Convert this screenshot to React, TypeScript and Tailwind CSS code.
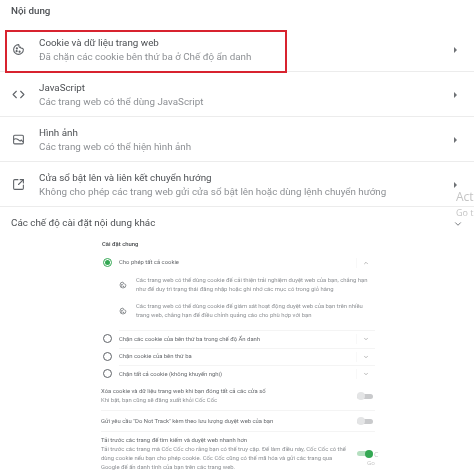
import { ChevronDown, ChevronUp, Code, SquareArrowOutUpRight } from "lucide-react";
import type { ReactNode } from "react";

function CookieIcon({ className }: { className: string }) {
  return (
    <svg viewBox="0 0 24 24" fill="none" stroke="currentColor" strokeWidth="2" className={className}>
      <path d="M12 3a9 9 0 1 0 9 9c-.3-1.6-1.6-1.6-2.6-2.4-1.2.4-2.8-.4-3-1.9C13.800 8.700 12.400 7 13 4.500 12.800 3.700 12.500 3.200 12 3Z" />
      <circle cx="9" cy="10" r="1" fill="currentColor" />
      <circle cx="8.500" cy="15" r="1" fill="currentColor" />
      <circle cx="14" cy="16" r="1" fill="currentColor" />
    </svg>
  );
}

function PictureIcon({ className }: { className: string }) {
  return (
    <svg viewBox="0 0 24 24" fill="none" stroke="currentColor" strokeWidth="2" className={className}>
      <rect x="3" y="4" width="18" height="16" rx="2" />
      <path d="M3 12c3-2 5-2 8 0l4 3 2-2 4 4" />
    </svg>
  );
}

function Row({ icon, title, sub }: { icon: ReactNode; title: string; sub: string }) {
  return (
    <div className="flex h-[45px] items-center border-b border-[#ececec] pl-[12px] pr-[17px] pt-[1px]">
      <div className="flex w-[27px] shrink-0 text-[#5f6368]">{icon}</div>
      <div className="flex-1 leading-[13.500px]">
        <div className="text-[9.800px] text-[#4d5054]">{title}</div>
        <div className="text-[9.800px] text-[#8d9094]">{sub}</div>
      </div>
      <div className="h-0 w-0 border-y-[3px] border-l-[3.500px] border-y-transparent border-l-[#6f7276]" />
    </div>
  );
}

function Radio({ label, on, sep }: { label: string; on?: boolean; sep?: boolean }) {
  return (
    <div className="flex items-center pl-[1.500px]">
      <div className={`flex h-[9px] w-[9px] shrink-0 items-center justify-center rounded-full border ${on ? "border-[#34a853]" : "border-[#5f6368]"}`}>
        {on && <div className="h-[5px] w-[5px] rounded-full bg-[#34a853]" />}
      </div>
      <div className={`ml-[7.500px] flex h-[17.500px] flex-1 items-center border-[#f4f4f4] text-[5.900px] text-[#66696d] ${sep ? "border-t" : ""}`}>
        <div className="flex-1">{label}</div>
        <div className="flex h-[10px] w-[19px] items-center justify-center border-l border-[#f8f8f8]">
          {on ? <ChevronUp className="h-[6px] w-[6px] text-[#777]" /> : <ChevronDown className="h-[6px] w-[6px] text-[#777]" />}
        </div>
      </div>
    </div>
  );
}

function Toggle({ on }: { on?: boolean }) {
  return (
    <div className={`relative h-[5px] w-[16px] shrink-0 rounded-full ${on ? "bg-[#b5dfc0]" : "bg-[#c9cacc]"}`}>
      <div className={`absolute top-[-1.500px] h-[8px] w-[8px] rounded-full ${on ? "right-0 bg-[#34a853]" : "left-0 bg-[#e4e5e6]"}`} />
    </div>
  );
}

export default function App() {
  return (
    <div className="relative h-[474px] w-[474px] overflow-hidden bg-white font-['Roboto',sans-serif] blur-[0.5px]">
      <div className="flex h-[27px] items-center pb-[5px] pl-[11px] text-[9.800px] font-medium text-[#4d5054]">Nội dung</div>
      <Row icon={<CookieIcon className="h-[13px] w-[13px]" />} title="Cookie và dữ liệu trang web" sub="Đã chặn các cookie bên thứ ba ở Chế độ ẩn danh" />
      <Row icon={<Code className="h-[13px] w-[13px]" />} title="JavaScript" sub="Các trang web có thể dùng JavaScript" />
      <Row icon={<PictureIcon className="h-[13px] w-[13px]" />} title="Hình ảnh" sub="Các trang web có thể hiện hình ảnh" />
      <Row icon={<SquareArrowOutUpRight className="h-[13px] w-[13px]" />} title="Cửa sổ bật lên và liên kết chuyển hướng" sub="Không cho phép các trang web gửi cửa sổ bật lên hoặc dùng lệnh chuyển hướng" />
      <div className="flex h-[33px] items-center pl-[11px] pr-[11px] text-[9.800px] text-[#4d5054]">
        <div className="flex-1">Các chế độ cài đặt nội dung khác</div>
        <ChevronDown className="h-[10px] w-[10px] text-[#5f6368]" />
      </div>

      <div className="ml-[101px] w-[274px]">
        <div className="ml-[1px] text-[5.900px] font-medium leading-[8px] text-[#44474a]">Cài đặt chung</div>
        <div className="mt-[6px]">
          <Radio label="Cho phép tất cả cookie" on />
          <div className="pl-[18px] pt-[4.500px] text-[5.900px] leading-[9px] text-[#8d9094]">
            <div className="flex items-center">
              <CookieIcon className="mr-[9px] h-[8px] w-[8px] shrink-0 text-[#5f6368]" />
              <div className="w-[236px]">Các trang web có thể dùng cookie để cải thiện trải nghiệm duyệt web của bạn, chẳng hạn như để duy trì trạng thái đăng nhập hoặc ghi nhớ các mục có trong giỏ hàng</div>
            </div>
            <div className="mt-[8px] flex items-center">
              <CookieIcon className="mr-[9px] h-[8px] w-[8px] shrink-0 text-[#5f6368]" />
              <div className="w-[236px]">Các trang web có thể dùng cookie để giám sát hoạt động duyệt web của bạn trên nhiều trang web, chẳng hạn để điều chỉnh quảng cáo cho phù hợp với bạn</div>
            </div>
          </div>
          <div className="mt-[10px]"><Radio label="Chặn các cookie của bên thứ ba trong chế độ Ẩn danh" sep /></div>
          <Radio label="Chặn cookie của bên thứ ba" sep />
          <Radio label="Chặn tất cả cookie (không khuyến nghị)" sep />
        </div>

        <div className="flex h-[28.500px] items-center border-b border-[#f4f4f4] pr-[2px] text-[5.900px] leading-[9.500px]">
          <div className="flex-1">
            <div className="text-[#66696d]">Xóa cookie và dữ liệu trang web khi bạn đóng tất cả các cửa sổ</div>
            <div className="text-[#8d9094]">Khi bật, bạn cũng sẽ đăng xuất khỏi Cốc Cốc</div>
          </div>
          <Toggle />
        </div>
        <div className="flex h-[21px] items-center border-b border-[#f4f4f4] pr-[2px] text-[5.900px] text-[#66696d]">
          <div className="flex-1">Gửi yêu cầu "Do Not Track" kèm theo lưu lượng duyệt web của bạn</div>
          <Toggle />
        </div>
        <div className="flex items-center pr-[2px] pt-[3.500px] text-[5.900px] leading-[9px]">
          <div className="w-[248px]">
            <div className="text-[#66696d]">Tải trước các trang để tìm kiếm và duyệt web nhanh hơn</div>
            <div className="text-[#8d9094]">Tải trước các trang mà Cốc Cốc cho rằng bạn có thể truy cập. Để làm điều này, Cốc Cốc có thể dùng cookie nếu bạn cho phép cookie. Cốc Cốc cũng có thể mã hóa và gửi các trang qua Google để ẩn danh tính của bạn trên các trang web.</div>
          </div>
          <div className="ml-auto"><Toggle on /></div>
        </div>
      </div>

      {/* red highlight from the annotated screenshot */}
      <div className="absolute left-[5px] top-[30px] h-[43px] w-[282px] border-2 border-[#d8232f]" />
      {/* windows activation watermark */}
      <div className="absolute left-[456px] top-[189px] font-['Open_Sans',sans-serif] text-[12px] leading-[16px] text-[#c4c4c4]">Act</div>
      <div className="absolute left-[456px] top-[207px] font-['Open_Sans',sans-serif] text-[9px] leading-[12px] text-[#c4c4c4]">Go t</div>
      <div className="absolute left-[374px] top-[450px] font-['Open_Sans',sans-serif] text-[7px] leading-[9px] text-[#c4c4c4]">C</div>
      <div className="absolute left-[367px] top-[459px] font-['Open_Sans',sans-serif] text-[6px] leading-[8px] text-[#c4c4c4]">Go</div>
    </div>
  );
}
